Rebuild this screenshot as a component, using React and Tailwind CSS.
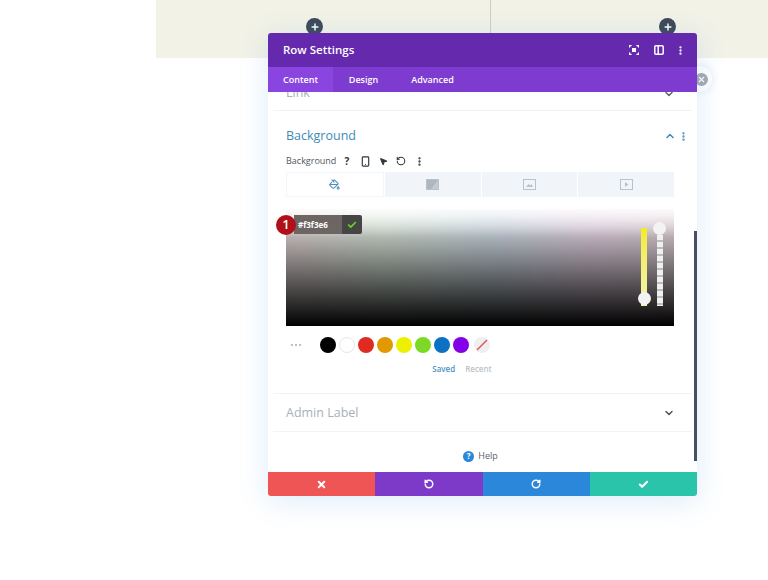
import React from 'react';
import { ChevronDown, ChevronUp, Check, X, RotateCcw, RotateCw, EllipsisVertical, Smartphone, MousePointer2, Plus, PaintBucket } from 'lucide-react';

const swatches = ['bg-[#000000]', 'bg-white border border-gray-200', 'bg-[#e02b20]', 'bg-[#e09900]', 'bg-[#edf000]', 'bg-[#7cda24]', 'bg-[#0c71c3]', 'bg-[#8300e9]'];

function AddButton({ className }) {
  return (
    <div className={`absolute top-[18px] w-[17px] h-[17px] rounded-full bg-[#3f4a58] flex items-center justify-center ${className}`}>
      <Plus size={10} strokeWidth={3.5} className="text-white" />
    </div>
  );
}

function ImageIcon({ children }) {
  return (
    <svg width="13" height="11" viewBox="0 0 13 11">
      <rect x=".5" y=".5" width="12" height="10" fill="none" stroke="#b9c1ca" />
      {children}
    </svg>
  );
}

function RowTool({ children }) {
  return <div className="w-[18px] h-[16px] flex items-center justify-center text-[#2d3640]">{children}</div>;
}

export default function App() {
  return (
    <div className="relative w-[768px] h-[580px] bg-white overflow-hidden font-['Open_Sans',sans-serif]">
      {/* fila de fundo */}
      <div className="ml-[156px] h-[58px] bg-[#f2f2e7] flex">
        <div className="w-[335px] border-r border-[#cfcfc4]" />
      </div>
      <AddButton className="left-[306px]" />
      <AddButton className="left-[659px]" />

      {/* botão atrás do modal */}
      <div className="absolute left-[686px] top-[66px] w-[26px] h-[26px] rounded-full bg-white shadow-[0_0_8px_rgba(120,150,200,0.2)] flex items-center justify-end pr-[5px]">
        <div className="w-[13px] h-[13px] rounded-full bg-[#a4aab0] flex items-center justify-center -mr-[1px]">
          <X size={9} strokeWidth={3} className="text-white" />
        </div>
      </div>

      {/* modal */}
      <div className="absolute left-[268px] top-[33px] w-[429px] h-[463px] flex flex-col bg-white rounded-[3px] shadow-[0_5px_30px_rgba(43,135,218,0.16)] overflow-hidden">
        <div className="h-[34px] shrink-0 bg-[#6529ae] flex items-center pl-[15px] text-white">
          <span className="text-[11.5px] font-semibold flex-1">Row Settings</span>
          <div className="flex items-center mr-[11px]">
            <svg width="10" height="10" viewBox="0 0 10 10" fill="none" stroke="currentColor" strokeWidth="1.2" className="mr-[15px]">
              <path d="M.6 2.6v-2h2M7.4.6h2v2M9.4 7.4v2h-2M2.6 9.4h-2v-2" />
              <rect x="3" y="3" width="4" height="4" fill="currentColor" stroke="none" />
            </svg>
            <svg width="10" height="10" viewBox="0 0 10 10" fill="none" stroke="currentColor" strokeWidth="1.5" className="mr-[11px]">
              <rect x=".8" y=".8" width="8.4" height="8.4" rx="1" />
              <path d="M4.2 1v8" />
            </svg>
            <EllipsisVertical size={11} strokeWidth={3} />
          </div>
        </div>
        <div className="h-[25px] shrink-0 bg-[#7d3bcf] flex text-[9px] font-semibold text-white items-stretch">
          <div className="w-[65px] bg-[#8a45e0] flex items-center justify-center">Content</div>
          <div className="w-[61px] flex items-center justify-center">Design</div>
          <div className="w-[73px] ml-[2px] flex items-center justify-center">Advanced</div>
        </div>

        <div className="relative flex-1 flex flex-col min-h-0">
          {/* barra de rolagem */}
          <div className="absolute right-0 top-[139px] w-[3px] h-[230px] bg-[#46505e]" />

          <div className="h-[19px] mx-[5px] border-b border-[#f1f3f5] flex justify-between pl-[13px] pr-[17px] overflow-hidden">
            <span className="text-[12.5px] leading-[13px] -mt-[6px] text-[#a9b0b7]">Link</span>
            <ChevronDown size={12} strokeWidth={3} className="text-[#5d6670] -mt-[4px]" />
          </div>

          <div className="flex items-center justify-between pl-[18px] pr-[8px] mt-[16px] h-[18px]">
            <span className="text-[12.5px] text-[#3e8ab5]">Background</span>
            <div className="flex items-center gap-[2px]">
              <ChevronUp size={12} strokeWidth={3} className="text-[#3e8ab5]" />
              <EllipsisVertical size={11} strokeWidth={3} className="text-[#3e8ab5]" />
            </div>
          </div>

          <div className="flex items-center pl-[18px] mt-[7px] h-[18px]">
            <span className="text-[9px] font-medium text-[#4f5761] w-[52px]">Background</span>
            <RowTool><span className="text-[10px] font-bold leading-none">?</span></RowTool>
            <RowTool><Smartphone size={11} strokeWidth={2.5} /></RowTool>
            <RowTool><MousePointer2 size={9} strokeWidth={2.5} fill="currentColor" /></RowTool>
            <RowTool><RotateCcw size={10} strokeWidth={2.5} /></RowTool>
            <RowTool><EllipsisVertical size={11} strokeWidth={3} /></RowTool>
          </div>

          <div className="ml-[18px] mr-[23px] mt-[2px] h-[25px] flex gap-[1px]">
            <div className="flex-1 bg-white border border-[#f3f5f8] flex items-center justify-center">
              <PaintBucket size={11} strokeWidth={2.2} className="text-[#4c8fb8]" />
            </div>
            <div className="flex-1 bg-[#f1f5f9] flex items-center justify-center">
              <ImageIcon><rect x="1" y="1" width="11" height="9" fill="#c3cad2" /><path d="M1 1h11L5 10H1z" fill="#aeb6c0" /></ImageIcon>
            </div>
            <div className="flex-1 bg-[#f1f5f9] flex items-center justify-center">
              <ImageIcon><path d="M3 8l2.5-3 1.5 1.5L8.5 5 10 8z" fill="#b9c1ca" /></ImageIcon>
            </div>
            <div className="flex-1 bg-[#f1f5f9] flex items-center justify-center">
              <ImageIcon><path d="M5 3l3.500 2.500L5 8z" fill="#b9c1ca" /></ImageIcon>
            </div>
          </div>

          {/* seletor de cor */}
          <div className="relative ml-[18px] mr-[23px] mt-[12px] h-[117px] bg-[linear-gradient(to_bottom,rgba(255,255,255,0)_0%,#000_100%),linear-gradient(to_right,#f3e6e6_0%,#e8f5e9_25%,#dfeaf5_55%,#f5e3f3_80%,#f0e2e8_100%)]">
            <div className="absolute inset-x-0 top-0 h-[28px] bg-gradient-to-b from-white/80 to-transparent" />
            <div className="absolute left-[355px] top-[19px] w-[6px] h-[78px] bg-gradient-to-b from-[#f3ec1c] to-[#f3f3b0]" />
            <div className="absolute left-[352px] top-[83px] w-[13px] h-[13px] rounded-full bg-[#f3f3f3]" />
            <div className="absolute left-[371px] top-[19px] w-[6px] h-[78px] bg-[repeating-linear-gradient(to_bottom,#f0f0f0_0px,#f0f0f0_5px,#bdbdbd_5px,#bdbdbd_7px)]" />
            <div className="absolute left-[367px] top-[13px] w-[13px] h-[13px] rounded-full bg-[#f3f3f3]" />
            <div className="absolute left-[58px] top-[1px] w-[18px] h-[18px] rounded-full border border-white/70" />
            <div className="absolute -left-[10px] top-[6px] flex items-center h-[19px]">
              <div className="relative z-10 w-[20px] h-[20px] rounded-full bg-[#b01018] text-white text-[13px] font-semibold flex items-center justify-center">1</div>
              <div className="-ml-[2px] w-[48px] h-[19px] bg-[#6d6563] text-white text-[8px] font-bold flex items-center pl-[4px]">#f3f3e6</div>
              <div className="w-[20px] h-[19px] bg-[#454543] rounded-r-[2px] flex items-center justify-center">
                <Check size={10} strokeWidth={4} className="text-[#6fd12e]" />
              </div>
            </div>
          </div>

          <div className="flex items-center pl-[23px] mt-[9px] h-[20px]">
            <div className="flex gap-[2px] w-[29px]">
              <span className="w-[2px] h-[2px] rounded-full bg-[#a5abb2]" />
              <span className="w-[2px] h-[2px] rounded-full bg-[#a5abb2]" />
              <span className="w-[2px] h-[2px] rounded-full bg-[#a5abb2]" />
            </div>
            <div className="flex gap-[3px]">
              {swatches.map((s, i) => <span key={i} className={`w-[16px] h-[16px] rounded-full ${s}`} />)}
              <span className="w-[16px] h-[16px] rounded-full bg-[#efefef] ml-[2px] flex items-center justify-center">
                <svg width="14" height="14" viewBox="0 0 14 14"><path d="M2 12L12 2" stroke="#d9565a" strokeWidth="1.4" /></svg>
              </span>
            </div>
          </div>

          <div className="flex justify-center gap-[10px] mt-[8px] h-[12px] items-center text-[8px] font-semibold pr-[41px]">
            <span className="text-[#4c93bf]">Saved</span>
            <span className="text-[#bcc3ca]">Recent</span>
          </div>

          <div className="mx-[5px] mt-[18px] border-t border-b border-[#f1f3f5] h-[39px] pt-[1px] flex items-center justify-between pl-[13px] pr-[17px]">
            <span className="text-[12.5px] text-[#a9b0b7]">Admin Label</span>
            <ChevronDown size={12} strokeWidth={3} className="text-[#4a535d]" />
          </div>

          <div className="flex items-center justify-center gap-[4px] mt-[16px] h-[16px] pr-[4px]">
            <span className="w-[11px] h-[11px] rounded-full bg-[#2b87da] text-white text-[8px] font-bold flex items-center justify-center">?</span>
            <span className="text-[9px] font-medium text-[#5b636c]">Help</span>
          </div>
        </div>

        <div className="h-[24px] shrink-0 grid grid-cols-4 text-white">
          <div className="bg-[#ef5555] flex items-center justify-center"><X size={11} strokeWidth={4.5} /></div>
          <div className="bg-[#7d3ac9] flex items-center justify-center"><RotateCcw size={10} strokeWidth={3.5} /></div>
          <div className="bg-[#2b87da] flex items-center justify-center"><RotateCw size={10} strokeWidth={3.5} /></div>
          <div className="bg-[#29c4a9] flex items-center justify-center"><Check size={11} strokeWidth={4.5} /></div>
        </div>
      </div>
    </div>
  );
}
